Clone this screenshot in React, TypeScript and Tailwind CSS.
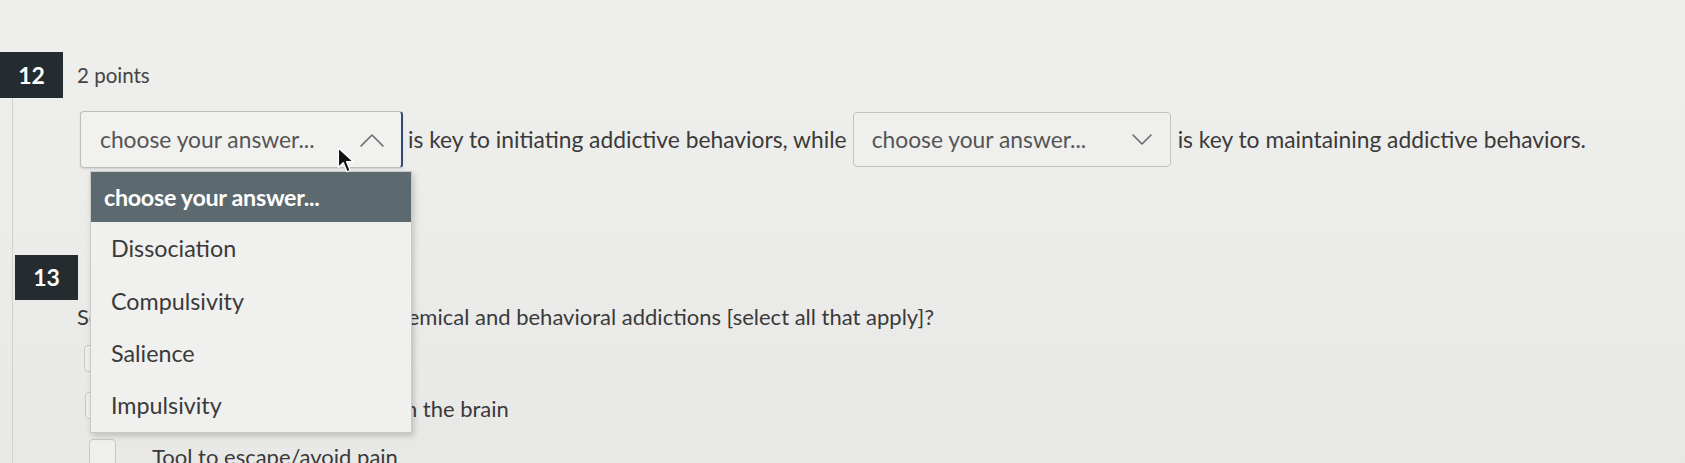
import React from "react";

function ChevronUp() {
  return (
    <svg width="26" height="16" viewBox="0 0 26 16" fill="none">
      <path d="M2 14 L13 3 L24 14" stroke="#6b6b6b" strokeWidth="1.6" strokeLinecap="round" strokeLinejoin="round" />
    </svg>
  );
}

function ChevronDown() {
  return (
    <svg width="22" height="13" viewBox="0 0 22 13" fill="none">
      <path d="M2 2 L11 11 L20 2" stroke="#6b6b6b" strokeWidth="1.6" strokeLinecap="round" strokeLinejoin="round" />
    </svg>
  );
}

function Cursor() {
  return (
    <svg width="20" height="28" viewBox="0 0 18 26" className="absolute left-[256px] top-[35px] z-20">
      <path d="M1 1 L1 19 L5.5 14.5 L9 23 L12 21.8 L8.6 13.6 L15 13.6 Z" fill="#111" stroke="#fff" strokeWidth="1.2" strokeLinejoin="round" />
    </svg>
  );
}

const items = ["Dissociation", "Compulsivity", "Salience", "Impulsivity"];

export default function App() {
  return (
    <div
      className="relative w-[1685px] h-[463px] overflow-hidden bg-linear-to-b from-[#efefed] to-[#e8e8e6] text-[#3a3a3a]"
      style={{ fontFamily: "Lato, 'Open Sans', sans-serif" }}
    >
      {/* Question 12 header */}
      <div className="pt-[52px] flex items-center">
        <div className="w-[63px] h-[46px] bg-[#242c2f] flex items-center justify-center text-white font-bold text-[23px]">
          12
        </div>
        <div className="ml-[14px] text-[20.5px] text-[#444]">2 points</div>
      </div>

      {/* Question body with left rule */}
      <div className="ml-[12px] border-l border-[#d0d0ce] pl-[67px] pt-[13px] h-[400px]">
        <div className="flex items-center text-[22.8px] text-[#3a3a3a]">
          {/* Dropdown 1 (open) */}
          <div className="relative w-[323px] h-[57px] shrink-0 rounded-[4px] border border-[#bdbdbb] border-r-2 border-r-[#2e4a78] bg-[#f1f1f0] shadow-[0_1px_2px_rgba(0,0,0,0.12)] flex items-center justify-between pl-[19px] pr-[16px]">
            <span className="text-[#555]">choose your answer...</span>
            <ChevronUp />
            <Cursor />
            {/* Menu */}
            <div className="absolute left-[9px] top-[59px] w-[322px] h-[262px] z-10 bg-[#f0f0ef] border border-[#c9c9c7] shadow-[2px_3px_6px_rgba(0,0,0,0.18)] flex flex-col">
              <div className="h-[51px] bg-[#5c6a6f] flex items-center pl-[13px] text-white font-bold text-[23.3px] tracking-[-0.3px]">
                choose your answer...
              </div>
              {items.map((it) => (
                <div key={it} className="h-[53px] flex items-center pl-[20px] text-[23.3px] text-[#3a3a3a]">
                  {it}
                </div>
              ))}
            </div>
          </div>
          <span className="ml-[5px] whitespace-nowrap">is key to initiating addictive behaviors, while</span>
          {/* Dropdown 2 */}
          <div className="ml-[6px] w-[318px] h-[55px] shrink-0 rounded-[4px] border border-[#c3c3c1] bg-[#efefee] flex items-center justify-between pl-[18px] pr-[17px]">
            <span className="text-[#555]">choose your answer...</span>
            <ChevronDown />
          </div>
          <span className="ml-[7px] whitespace-nowrap">is key to maintaining addictive behaviors.</span>
        </div>

        {/* Question 13 */}
        <div className="mt-[87px] -ml-[65px] w-[63px] h-[45px] bg-[#242c2f] flex items-center justify-center text-white font-bold text-[23px]">
          13
        </div>
        <div className="mt-[3px] -ml-[3px] text-[22px] whitespace-nowrap leading-[28px]">
          Select the similarities shared by chemical and behavioral addictions [select all that apply]?
        </div>
        <div className="mt-[14px] flex flex-col gap-[20px] text-[22px]">
          <div className="flex items-center h-[27px]">
            <div className="w-[27px] h-[27px] ml-[4px] rounded-[4px] border border-[#c6c6c4] bg-[#efefee]" />
            <span className="ml-[40px]">Tolerance and withdrawal</span>
          </div>
          <div className="flex items-center h-[27px]">
            <div className="w-[27px] h-[27px] ml-[5px] rounded-[4px] border border-[#c6c6c4] bg-[#efefee]" />
            <span className="ml-[40px] mt-[6px] whitespace-nowrap">Release of dopamine within the brain</span>
          </div>
          <div className="flex items-center h-[27px]">
            <div className="w-[27px] h-[27px] ml-[9px] rounded-[4px] border border-[#c6c6c4] bg-[#efefee]" />
            <span className="ml-[36px] mt-[8px] whitespace-nowrap">Tool to escape/avoid pain</span>
          </div>
        </div>
      </div>
    </div>
  );
}
